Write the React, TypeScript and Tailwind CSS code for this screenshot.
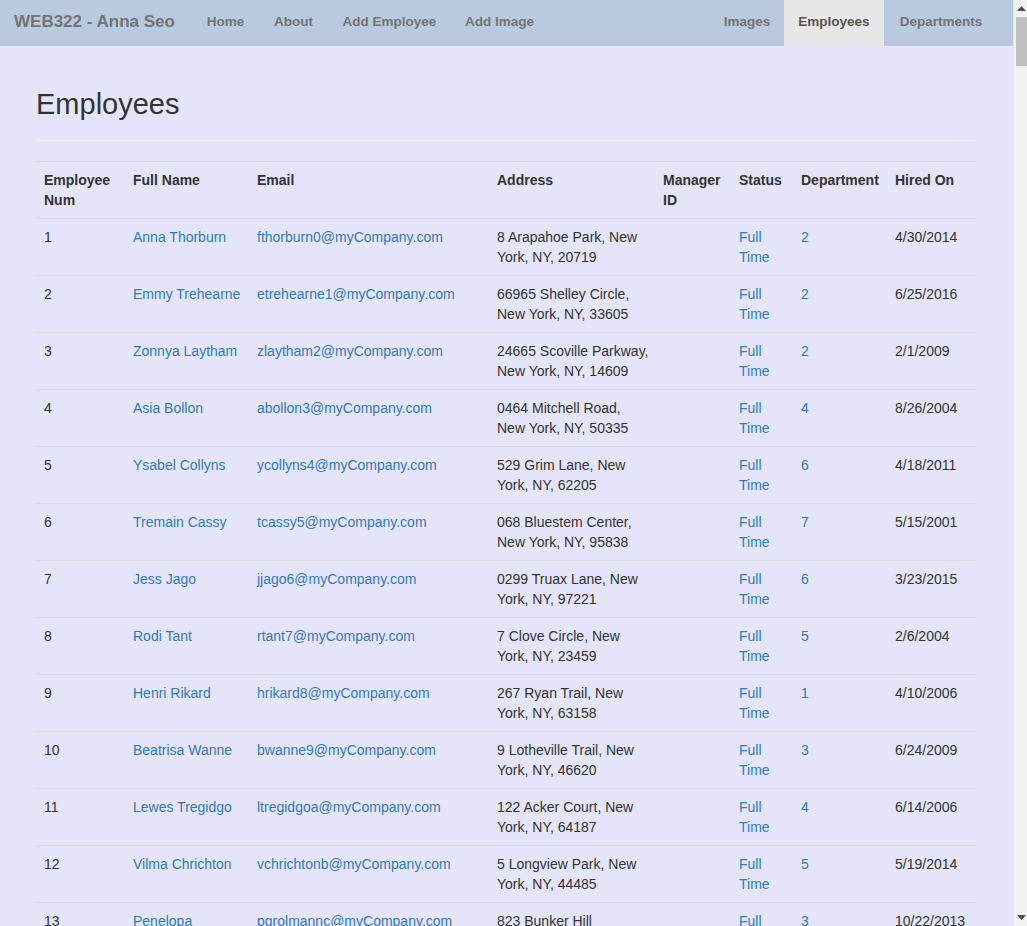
import React from 'react';

type Employee = {
  num: number;
  name: string;
  email: string;
  address: [string, string];
  dept: number;
  hired: string;
};

const EMPLOYEES: Employee[] = [
  { num: 1, name: 'Anna Thorburn', email: 'fthorburn0@myCompany.com', address: ['8 Arapahoe Park, New', 'York, NY, 20719'], dept: 2, hired: '4/30/2014' },
  { num: 2, name: 'Emmy Trehearne', email: 'etrehearne1@myCompany.com', address: ['66965 Shelley Circle,', 'New York, NY, 33605'], dept: 2, hired: '6/25/2016' },
  { num: 3, name: 'Zonnya Laytham', email: 'zlaytham2@myCompany.com', address: ['24665 Scoville Parkway,', 'New York, NY, 14609'], dept: 2, hired: '2/1/2009' },
  { num: 4, name: 'Asia Bollon', email: 'abollon3@myCompany.com', address: ['0464 Mitchell Road,', 'New York, NY, 50335'], dept: 4, hired: '8/26/2004' },
  { num: 5, name: 'Ysabel Collyns', email: 'ycollyns4@myCompany.com', address: ['529 Grim Lane, New', 'York, NY, 62205'], dept: 6, hired: '4/18/2011' },
  { num: 6, name: 'Tremain Cassy', email: 'tcassy5@myCompany.com', address: ['068 Bluestem Center,', 'New York, NY, 95838'], dept: 7, hired: '5/15/2001' },
  { num: 7, name: 'Jess Jago', email: 'jjago6@myCompany.com', address: ['0299 Truax Lane, New', 'York, NY, 97221'], dept: 6, hired: '3/23/2015' },
  { num: 8, name: 'Rodi Tant', email: 'rtant7@myCompany.com', address: ['7 Clove Circle, New', 'York, NY, 23459'], dept: 5, hired: '2/6/2004' },
  { num: 9, name: 'Henri Rikard', email: 'hrikard8@myCompany.com', address: ['267 Ryan Trail, New', 'York, NY, 63158'], dept: 1, hired: '4/10/2006' },
  { num: 10, name: 'Beatrisa Wanne', email: 'bwanne9@myCompany.com', address: ['9 Lotheville Trail, New', 'York, NY, 46620'], dept: 3, hired: '6/24/2009' },
  { num: 11, name: 'Lewes Tregidgo', email: 'ltregidgoa@myCompany.com', address: ['122 Acker Court, New', 'York, NY, 64187'], dept: 4, hired: '6/14/2006' },
  { num: 12, name: 'Vilma Chrichton', email: 'vchrichtonb@myCompany.com', address: ['5 Longview Park, New', 'York, NY, 44485'], dept: 5, hired: '5/19/2014' },
  { num: 13, name: 'Penelopa Grolmann', email: 'pgrolmannc@myCompany.com', address: ['823 Bunker Hill', 'Junction, New York, NY'], dept: 3, hired: '10/22/2013' },
  { num: 14, name: 'Kerr Mayne', email: 'kmayned@myCompany.com', address: ['4 Dwight Street, New', 'York, NY, 30512'], dept: 1, hired: '7/12/2007' },
];

const LEFT_LINKS = [
  { label: 'Home', w: 'w-[67px]' },
  { label: 'About', w: 'w-[69px]' },
  { label: 'Add Employee', w: 'w-[123px]' },
  { label: 'Add Image', w: 'w-[97px]' },
];

const RIGHT_LINKS = [
  { label: 'Images', w: 'w-[74px]', active: false },
  { label: 'Employees', w: 'w-[100px]', active: true },
  { label: 'Departments', w: 'w-[114px]', active: false },
];

const Navbar = () => (
  <nav className="h-[46px] bg-[#b9c9df] flex justify-between pr-[15px] mr-px">
    <div className="flex h-full pb-[2px]">
      <a className="flex items-center pl-[14px] pr-[15px] text-[17px] font-bold text-[#747474] w-[192px]">WEB322 - Anna Seo</a>
      {LEFT_LINKS.map((l) => (
        <a key={l.label} className={`${l.w} flex items-center justify-center text-[13.5px] font-bold text-[#747474]`}>
          {l.label}
        </a>
      ))}
    </div>
    <div className="flex h-full">
      {RIGHT_LINKS.map((l) => (
        <a
          key={l.label}
          className={`${l.w} flex items-center justify-center pb-[2px] text-[13.5px] font-bold ${l.active ? 'bg-[#e7e7e7] text-[#555]' : 'text-[#747474]'}`}
        >
          {l.label}
        </a>
      ))}
    </div>
  </nav>
);

// window scrollbar as it shows in the screenshot
const Scrollbar = () => (
  <aside className="sticky top-0 w-[13px] h-[926px] shrink-0 bg-[#f1f1f1] flex flex-col items-end">
    <div className="h-[17px] w-full flex items-center justify-end pr-[1px]">
      <svg width="9" height="5" viewBox="0 0 9 5">
        <path d="M4.5 0 L9 5 L0 5 Z" fill="#505050" />
      </svg>
    </div>
    <div className="w-[11px] h-[49px] bg-[#c1c1c1]" />
    <div className="flex-1" />
    <div className="h-[17px] w-full flex items-center justify-end pr-[1px]">
      <svg width="9" height="5" viewBox="0 0 9 5">
        <path d="M0 0 L9 0 L4.5 5 Z" fill="#505050" />
      </svg>
    </div>
  </aside>
);

const th = 'text-left align-top font-bold px-2 pt-2 pb-2 border-t border-b border-[#ddd]';
const td = 'align-top px-2 pt-2 pb-2 border-t border-[#ddd]';

export default function App() {
  return (
    <div
      className="flex items-start bg-[#e5e5f9] text-[#333] text-[14px] leading-[20px]"
      style={{ fontFamily: '"Liberation Sans", Arial, sans-serif' }}
    >
      <div className="w-[1014px] shrink-0 min-h-screen">
        <Navbar />
        <main className="w-[970px] ml-[21px] px-[15px] pb-10">
          <div className="pt-[42px] pb-[20px] border-b border-[#eee]">
            <h1 className="text-[29px] leading-[32px] font-normal">Employees</h1>
          </div>
          <table className="mt-[20px] w-full table-fixed border-collapse">
            <colgroup>
              <col className="w-[89px]" />
              <col className="w-[124px]" />
              <col className="w-[240px]" />
              <col className="w-[166px]" />
              <col className="w-[76px]" />
              <col className="w-[62px]" />
              <col className="w-[94px]" />
              <col className="w-[89px]" />
            </colgroup>
            <thead>
              <tr>
                <th className={th}>Employee Num</th>
                <th className={th}>Full Name</th>
                <th className={th}>Email</th>
                <th className={th}>Address</th>
                <th className={th}>Manager ID</th>
                <th className={th}>Status</th>
                <th className={th}>Department</th>
                <th className={th}>Hired On</th>
              </tr>
            </thead>
            <tbody>
              {EMPLOYEES.map((e) => (
                <tr key={e.num}>
                  <td className={td}>{e.num}</td>
                  <td className={td}>
                    <a className="text-[#337ab7]">{e.name}</a>
                  </td>
                  <td className={td}>
                    <a className="text-[#337ab7]">{e.email}</a>
                  </td>
                  <td className={td}>
                    <span className="block whitespace-nowrap">{e.address[0]}</span>
                    <span className="block whitespace-nowrap">{e.address[1]}</span>
                  </td>
                  <td className={td}></td>
                  <td className={td}>
                    <a className="text-[#337ab7]">Full Time</a>
                  </td>
                  <td className={td}>
                    <a className="text-[#337ab7]">{e.dept}</a>
                  </td>
                  <td className={td}>{e.hired}</td>
                </tr>
              ))}
            </tbody>
          </table>
        </main>
      </div>
      <Scrollbar />
    </div>
  );
}
